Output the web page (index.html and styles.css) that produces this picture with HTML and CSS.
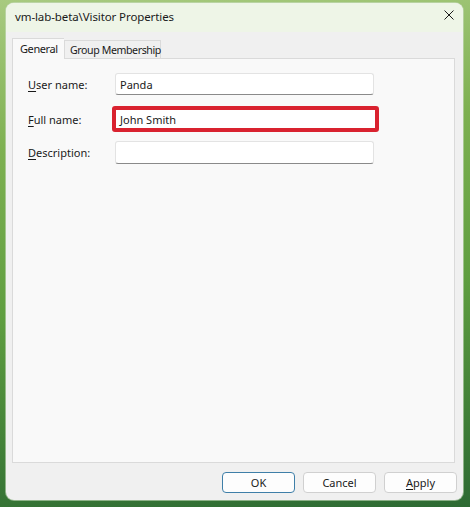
FILE: index.html
```html
<!DOCTYPE html>
<html lang="en">
<head>
<meta charset="utf-8">
<title>vm-lab-beta\Visitor Properties</title>
<link rel="stylesheet" href="styles.css">
</head>
<body>
<div class="desk">
  <div class="window">
    <div class="titlebar">
      <span class="title">vm-lab-beta\Visitor Properties</span>
      <svg class="close" width="10" height="10" viewBox="0 0 10 10"><path d="M0.5 0.5 L9.5 9.5 M9.5 0.5 L0.5 9.5" stroke="#1a1a1a" stroke-width="1" fill="none"/></svg>
    </div>
    <div class="body">
      <div class="tabs">
        <div class="tab active">General</div>
        <div class="tab">Group Membership</div>
      </div>
      <div class="panel">
        <div class="row r1">
          <span class="label"><u>U</u>ser name:</span>
          <div class="input">Panda</div>
        </div>
        <div class="row r2">
          <span class="label"><u>F</u>ull name:</span>
          <div class="input highlight">John Smith</div>
        </div>
        <div class="row r3">
          <span class="label"><u>D</u>escription:</span>
          <div class="input tall"></div>
        </div>
      </div>
      <div class="footer">
        <button class="btn default">OK</button>
        <button class="btn">Cancel</button>
        <button class="btn"><u>A</u>pply</button>
      </div>
    </div>
  </div>
</div>
</body>
</html>
```
FILE: styles.css
```css
html, body {
  margin: 0;
  padding: 0;
}
body {
  width: 470px;
  height: 507px;
  overflow: hidden;
  font-family: "Noto Sans", "Open Sans", sans-serif;
  font-size: 11px;
  color: #1a1a1a;
}
.desk {
  width: 470px;
  height: 507px;
  padding: 3px 0 0 6px;
  box-sizing: border-box;
  background: linear-gradient(175deg, #a8ca80 0%, #7db050 28%, #5f9e40 58%, #3f7e37 84%, #2d6a33 100%);
}
.window {
  width: 457px;
  height: 497px;
  border-radius: 8px;
  background: #f0f0f0;
  box-shadow: 0 0 0 1px rgba(200, 220, 190, 0.6);
  overflow: hidden;
  display: flex;
  flex-direction: column;
}
.titlebar {
  height: 29px;
  flex: none;
  background: #eef5e7;
  display: flex;
  align-items: center;
  padding: 0 9px;
  justify-content: space-between;
}
.title {
  font-size: 11.5px;
  letter-spacing: -0.1px;
  margin-top: -2px;
}
.close {
  margin-top: -6px;
}
.body {
  flex: 1;
  padding: 6px 8px 0 6px;
  display: flex;
  flex-direction: column;
}
.tabs {
  height: 20px;
  display: flex;
  align-items: flex-end;
  position: relative;
  z-index: 1;
}
.tab {
  box-sizing: border-box;
  height: 18px;
  border: 1px solid #dadada;
  border-bottom: none;
  background: #f0f0f0;
  padding: 0 2px 0 5px;
  display: flex;
  align-items: center;
  font-size: 10.6px;
  letter-spacing: -0.4px;
  white-space: nowrap;
  width: 97px;
}
.tab.active {
  height: 21px;
  margin-bottom: -1px;
  background: #f9f9f9;
  width: 52px;
  padding: 0 0 2px 7px;
  border-right: none;
  font-size: 11px;
}
.panel {
  box-sizing: border-box;
  height: 405px;
  border: 1px solid #dadada;
  background: #f9f9f9;
  padding: 14px 0 0 15px;
  display: flex;
  flex-direction: column;
}
.row {
  display: flex;
  align-items: center;
}
.r2 { margin-top: 11px; }
.r3 { margin-top: 9px; }
.label {
  width: 87px;
  flex: none;
}
.label u,
.btn u {
  text-underline-offset: 2px;
}
.input {
  box-sizing: border-box;
  width: 259px;
  height: 22px;
  background: #ffffff;
  border: 1px solid #e3e3e3;
  border-bottom: 1px solid #8a8a8a;
  border-radius: 3px;
  padding: 0 4px;
  display: flex;
  align-items: center;
}
.input.tall {
  height: 23px;
}
.input.highlight {
  width: 267px;
  height: 26px;
  margin-left: -3px;
  border: 4px solid #d9222f;
  border-radius: 3px;
  padding: 0 4px;
}
.footer {
  display: flex;
  justify-content: flex-end;
  gap: 8px;
  margin-top: 9px;
  margin-right: -2px;
}
.btn {
  box-sizing: border-box;
  width: 73px;
  height: 21px;
  border: 1px solid #d0d0d0;
  border-radius: 4px;
  background: #fdfdfd;
  font-family: "Noto Sans", "Open Sans", sans-serif;
  font-size: 11px;
  color: #1a1a1a;
  padding: 0;
  line-height: 19px;
}
.btn.default {
  border-color: #3f7fa8;
}
```
